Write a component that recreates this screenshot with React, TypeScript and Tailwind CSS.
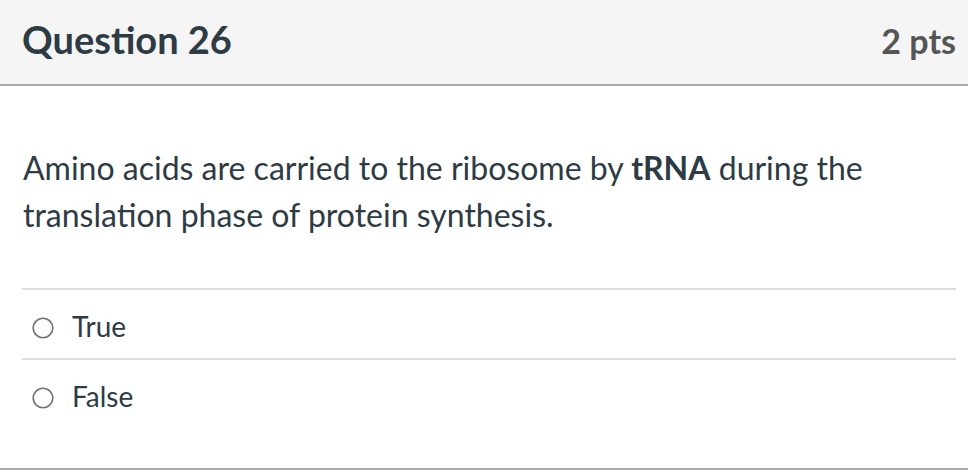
import React from "react";

function Radio() {
  return (
    <svg width="22" height="22" viewBox="0 0 22 22" className="mt-[8px] shrink-0">
      <circle cx="11" cy="11" r="9.8" fill="#fff" stroke="#737373" strokeWidth="1.6" />
    </svg>
  );
}

export default function App() {
  return (
    <div className="w-[968px] h-[476px] bg-white font-['Lato','Noto_Sans',sans-serif] text-[#2d3b45] overflow-hidden">
      <div className="h-[86px] bg-[#f5f5f5] border-b-2 border-[#a8a8a8] flex items-baseline justify-between pt-[17px] pl-[22px] pr-[12px]">
        <h2 className="text-[38px] leading-[44px] font-bold">Question 26</h2>
        <div className="text-[34px] leading-[44px] font-bold text-[#555555]">2 pts</div>
      </div>
      <div className="pl-[22px] pr-[12px]">
        <p className="mt-[58px] text-[32px] leading-[47px] pl-[1px]">
          Amino acids are carried to the ribosome by <strong className="font-bold">tRNA</strong> during the
          <br />
          translation phase of protein synthesis.
        </p>
        <div className="mt-[50px] border-t-2 border-[#dddddd]">
          <div className="h-[68px] flex items-center pl-[10px] gap-[18px]">
            <Radio />
            <span className="text-[28px] mt-[4px]">True</span>
          </div>
          <div className="border-t-2 border-[#dddddd] h-[70px] flex items-center pl-[10px] gap-[18px]">
            <Radio />
            <span className="text-[28px] mt-[4px]">False</span>
          </div>
        </div>
      </div>
      <div className="mt-[40px] border-t-2 border-[#aaaaaa]" />
    </div>
  );
}
